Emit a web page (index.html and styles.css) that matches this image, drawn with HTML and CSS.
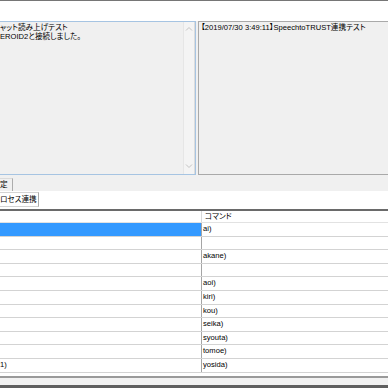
FILE: index.html
```html
<!DOCTYPE html>
<html lang="ja">
<head>
<meta charset="utf-8">
<link rel="stylesheet" href="styles.css">
</head>
<body>
<div class="window">
  <div class="topbar"></div>
  <div class="logs">
    <div class="box box-left">
      <div class="box-text">ャット読み上げテスト<br>EROID2と接続しました。</div>
      <div class="vscroll">
        <svg class="arrow" viewBox="0 0 8 5" width="8" height="5"><path d="M1 4.5 L4 1.5 L7 4.5" fill="none" stroke="#c2c2c2" stroke-width="1"/></svg>
        <svg class="arrow" viewBox="0 0 8 5" width="8" height="5"><path d="M1 0.5 L4 3.5 L7 0.5" fill="none" stroke="#c2c2c2" stroke-width="1"/></svg>
      </div>
    </div>
    <div class="gap"></div>
    <div class="box box-right">
      <div class="box-text">【2019/07/30 3:49:11】SpeechtoTRUST連携テスト</div>
    </div>
  </div>
  <div class="tabrow tabrow-back">
    <div class="tab tab-back">定</div>
  </div>
  <div class="tabrow tabrow-front">
    <div class="tab tab-front">ロセス連携</div>
  </div>
  <div class="grid">
    <div class="grow ghead">
      <div class="cell c1"></div>
      <div class="cell c2">コマンド</div>
    </div>
    <div class="grow"><div class="cell c1 sel"></div><div class="cell c2">ai)</div></div>
    <div class="grow"><div class="cell c1"></div><div class="cell c2"></div></div>
    <div class="grow"><div class="cell c1"></div><div class="cell c2">akane)</div></div>
    <div class="grow"><div class="cell c1"></div><div class="cell c2"></div></div>
    <div class="grow"><div class="cell c1"></div><div class="cell c2">aoi)</div></div>
    <div class="grow"><div class="cell c1"></div><div class="cell c2">kiri)</div></div>
    <div class="grow"><div class="cell c1"></div><div class="cell c2">kou)</div></div>
    <div class="grow"><div class="cell c1"></div><div class="cell c2">seika)</div></div>
    <div class="grow"><div class="cell c1"></div><div class="cell c2">syouta)</div></div>
    <div class="grow"><div class="cell c1"></div><div class="cell c2">tomoe)</div></div>
    <div class="grow"><div class="cell c1">1)</div><div class="cell c2">yosida)</div></div>
  </div>
  <div class="hscroll"></div>
</div>
</body>
</html>
```

FILE: styles.css
```css
* { box-sizing: border-box; }
html, body {
  margin: 0;
  padding: 0;
  width: 388px;
  height: 388px;
  overflow: hidden;
  background: #ffffff;
}
.window {
  width: 388px;
  height: 388px;
  display: flex;
  flex-direction: column;
  font-family: "Liberation Sans", "Noto Sans CJK JP", sans-serif;
  font-size: 7.6px;
  font-feature-settings: "palt";
  color: #000;
  overflow: hidden;
}
.topbar {
  height: 21px;
  flex: none;
  border-top: 1px solid #767676;
  background: #ffffff;
}
.logs {
  height: 154px;
  flex: none;
  display: flex;
  background: #f0f0f0;
}
.box {
  background: #f0f0f0;
  display: flex;
  border-top: 1px solid #a9a9a9;
  border-bottom: 1px solid #a9a9a9;
}
.box-left {
  width: 196px;
  border-color: #a6c4e2;
  border-right: 1px solid #a6c4e2;
}
.gap { width: 2px; background: #f0f0f0; }
.box-right {
  flex: 1;
  border-left: 1px solid #a9a9a9;
}
.box-text {
  flex: 1;
  padding: 2px 0 0 2px;
  line-height: 8.6px;
  white-space: nowrap;
  overflow: hidden;
}
.box-left .box-text { padding-left: 0; }
.vscroll {
  width: 12px;
  flex: none;
  background: #f4f4f4;
  border-left: 1px solid #e6e6e6;
  border-right: 1px solid #dcdcdc;
  display: flex;
  flex-direction: column;
  justify-content: space-between;
  align-items: center;
  padding: 4px 0 5px;
}
.arrow { display: block; }
.tabrow {
  flex: none;
  display: flex;
  align-items: flex-end;
}
.tabrow-back {
  height: 16px;
  background: #f0f0f0;
}
.tabrow-front {
  height: 18px;
  background: #ffffff;
  align-items: flex-start;
  padding-top: 1px;
}
.tab {
  line-height: 12px;
  white-space: nowrap;
}
.tab-back {
  height: 13px;
  width: 13px;
  border-right: 1px solid #acacac;
  border-top: 1px solid #dadada;
  padding-left: 0;
}
.tab-front {
  height: 15px;
  width: 39px;
  border-top: 1px solid #d4d4d4;
  border-right: 1px solid #acacac;
  border-bottom: 1px solid #d4d4d4;
  line-height: 13px;
}
.grid {
  flex: none;
  border-top: 2px solid #6a6a6a;
  background: #ffffff;
}
.grow {
  display: flex;
  height: 13.6px;
  border-bottom: 1px solid #d3d3d3;
}
.ghead {
  height: 12px;
  border-bottom: 1px solid #e2e2e2;
}
.cell {
  line-height: 12.6px;
  white-space: nowrap;
  overflow: hidden;
}
.ghead .cell { line-height: 11px; }
.c1 {
  width: 202px;
  flex: none;
  border-right: 1px solid #a5a5a5;
}
.ghead .c1 { border-right-color: #d9d9d9; }
.c2 {
  flex: 1;
  padding-left: 1px;
}
.ghead .c2 { padding-left: 3px; }
.sel { background: #3399ff; }
.hscroll {
  flex: none;
  margin-top: 3px;
  height: 12px;
  border-top: 2px solid #9a9a9a;
  border-bottom: 3px solid #606060;
  background: #f2f2f2;
}
```
